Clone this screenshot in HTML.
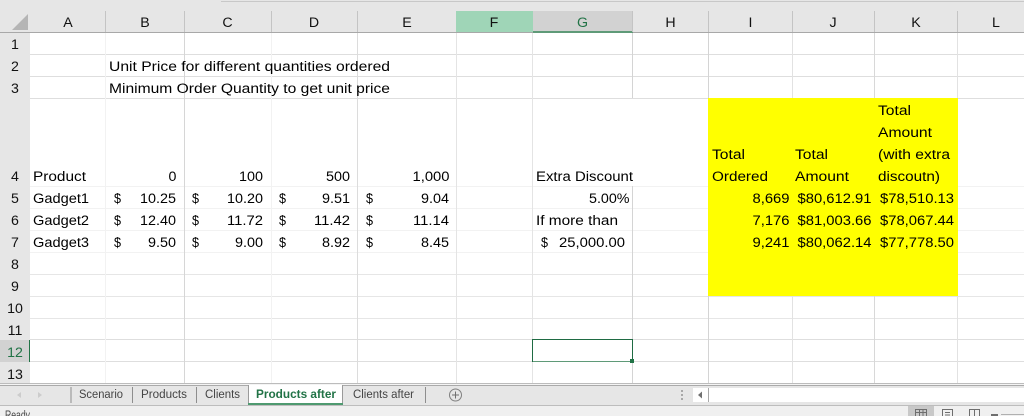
<!DOCTYPE html>
<html><head><meta charset="utf-8"><style>
html,body{margin:0;padding:0;background:#fff;width:1024px;height:416px;overflow:hidden}
svg{display:block;font-family:"Liberation Sans",sans-serif}
text{font-size:14.2px;fill:#000}
.h{text-anchor:middle;fill:#111}
.t{font-size:12.4px;fill:#444}
</style></head><body>
<svg width="1024" height="416" viewBox="0 0 1024 416" xmlns="http://www.w3.org/2000/svg">
<rect width="1024" height="416" fill="#fff"/>
<!-- horizontal grid -->
<g stroke="#dedede" stroke-width="1">
<path d="M30 54.5H1024M30 76.5H1024M30 98.5H708M958 98.5H1024"/>
</g>
<g stroke="#f2f2f2" stroke-width="1">
<path d="M30 186.5H1024M30 208.5H1024M30 230.5H1024M30 252.5H1024"/>
</g>
<g stroke="#e6e6e6" stroke-width="1">
<path d="M30 274.500H1024M30 296.500H1024M30 318.500H1024"/>
</g>
<g stroke="#dedede" stroke-width="1">
<path d="M30 339.5H1024M30 361.5H1024"/>
</g>
<!-- vertical grid -->
<g stroke-width="1" fill="none">
<path d="M105.5 32V383" stroke="#f2f2f2"/>
<path d="M184.5 32V383" stroke="#d6d6d6"/>
<path d="M271.5 32V383" stroke="#f2f2f2"/>
<path d="M357.5 32V383" stroke="#dcdcdc"/>
<path d="M456.5 32V383" stroke="#e4e4e4"/>
<path d="M532.5 32V383" stroke="#e4e4e4"/>
<path d="M632.5 32V98M632.5 186V383" stroke="#d4d4d4"/>
<path d="M708.5 32V383" stroke="#d4d4d4"/>
<path d="M792.5 32V383" stroke="#e2e2e2"/>
<path d="M874.5 32V383" stroke="#d8d8d8"/>
<path d="M957.5 32V383" stroke="#e2e2e2"/>
</g>
<!-- yellow block -->
<rect x="708" y="98" width="250" height="198" fill="#ffff00"/>
<!-- column header -->
<rect x="0" y="0" width="1024" height="32" fill="#e6e6e6"/>
<rect x="221" y="1" width="803" height="1" fill="#c8c8c8"/>
<rect x="0" y="32" width="1024" height="1" fill="#a8a8a8"/>
<rect x="456" y="11" width="77" height="21" fill="#9fd5b7"/>
<rect x="533" y="11" width="100" height="21" fill="#d2d2d2"/>
<rect x="533" y="31" width="100" height="2" fill="#5f9a78"/>
<path d="M28 14V30H12Z" fill="#b5b5b5"/>
<g fill="#c4c4c4">
<rect x="105" y="11" width="1" height="21"/><rect x="184" y="11" width="1" height="21"/><rect x="271" y="11" width="1" height="21"/><rect x="357" y="11" width="1" height="21"/><rect x="632" y="11" width="1" height="21"/><rect x="708" y="11" width="1" height="21"/><rect x="792" y="11" width="1" height="21"/><rect x="874" y="11" width="1" height="21"/><rect x="957" y="11" width="1" height="21"/>
</g>
<!-- row header -->
<rect x="0" y="33" width="30" height="351" fill="#e6e6e6"/>
<rect x="0" y="340" width="29" height="22" fill="#d2d2d2"/>
<rect x="29" y="340" width="1" height="22" fill="#217346"/>
<!-- column letters -->
<g>
<text class="h" x="68" y="27">A</text><text class="h" x="145" y="27">B</text><text class="h" x="227.5" y="27">C</text><text class="h" x="314" y="27">D</text><text class="h" x="407" y="27">E</text><text class="h" x="494" y="27">F</text>
<text class="h" x="582.5" y="27" style="fill:#217346">G</text><text class="h" x="670.5" y="27">H</text><text class="h" x="750.5" y="27">I</text><text class="h" x="833" y="27">J</text><text class="h" x="916" y="27">K</text><text class="h" x="996" y="27">L</text>
</g>
<!-- row numbers -->
<g>
<text class="h" x="15" y="49">1</text><text class="h" x="15" y="71">2</text><text class="h" x="15" y="93">3</text><text class="h" x="15" y="181">4</text><text class="h" x="15" y="203">5</text><text class="h" x="15" y="225">6</text><text class="h" x="15" y="247">7</text><text class="h" x="15" y="269">8</text><text class="h" x="15" y="291">9</text><text class="h" x="15" y="313">10</text><text class="h" x="15" y="335">11</text>
<text class="h" x="15" y="357" style="fill:#217346">12</text><text class="h" x="15" y="379">13</text>
</g>
<!-- headings -->
<text x="109" y="71" textLength="281" lengthAdjust="spacingAndGlyphs">Unit Price for different quantities ordered</text>
<text x="109" y="93" textLength="281" lengthAdjust="spacingAndGlyphs">Minimum Order Quantity to get unit price</text>
<!-- table -->
<text x="33" y="181" textLength="53" lengthAdjust="spacingAndGlyphs">Product</text>
<text x="33" y="203" textLength="56" lengthAdjust="spacingAndGlyphs">Gadget1</text>
<text x="33" y="225" textLength="56" lengthAdjust="spacingAndGlyphs">Gadget2</text>
<text x="33" y="247" textLength="56" lengthAdjust="spacingAndGlyphs">Gadget3</text>
<text x="168.5" y="181">0</text>
<text x="239" y="181" textLength="24" lengthAdjust="spacingAndGlyphs">100</text>
<text x="326" y="181" textLength="24" lengthAdjust="spacingAndGlyphs">500</text>
<text x="412.5" y="181" textLength="37" lengthAdjust="spacingAndGlyphs">1,000</text>
<g>
<text x="114" y="203" textLength="7" lengthAdjust="spacingAndGlyphs">$</text><text x="114" y="225" textLength="7" lengthAdjust="spacingAndGlyphs">$</text><text x="114" y="247" textLength="7" lengthAdjust="spacingAndGlyphs">$</text>
<text x="192" y="203" textLength="7" lengthAdjust="spacingAndGlyphs">$</text><text x="192" y="225" textLength="7" lengthAdjust="spacingAndGlyphs">$</text><text x="192" y="247" textLength="7" lengthAdjust="spacingAndGlyphs">$</text>
<text x="279" y="203" textLength="7" lengthAdjust="spacingAndGlyphs">$</text><text x="279" y="225" textLength="7" lengthAdjust="spacingAndGlyphs">$</text><text x="279" y="247" textLength="7" lengthAdjust="spacingAndGlyphs">$</text>
<text x="366" y="203" textLength="7" lengthAdjust="spacingAndGlyphs">$</text><text x="366" y="225" textLength="7" lengthAdjust="spacingAndGlyphs">$</text><text x="366" y="247" textLength="7" lengthAdjust="spacingAndGlyphs">$</text>
</g>
<text x="140" y="203" textLength="36" lengthAdjust="spacingAndGlyphs">10.25</text>
<text x="140" y="225" textLength="36" lengthAdjust="spacingAndGlyphs">12.40</text>
<text x="148" y="247" textLength="28" lengthAdjust="spacingAndGlyphs">9.50</text>
<text x="227" y="203" textLength="36" lengthAdjust="spacingAndGlyphs">10.20</text>
<text x="227" y="225" textLength="36" lengthAdjust="spacingAndGlyphs">11.72</text>
<text x="235" y="247" textLength="28" lengthAdjust="spacingAndGlyphs">9.00</text>
<text x="322" y="203" textLength="28" lengthAdjust="spacingAndGlyphs">9.51</text>
<text x="314" y="225" textLength="36" lengthAdjust="spacingAndGlyphs">11.42</text>
<text x="322" y="247" textLength="28" lengthAdjust="spacingAndGlyphs">8.92</text>
<text x="421" y="203" textLength="28" lengthAdjust="spacingAndGlyphs">9.04</text>
<text x="413" y="225" textLength="36" lengthAdjust="spacingAndGlyphs">11.14</text>
<text x="421" y="247" textLength="28" lengthAdjust="spacingAndGlyphs">8.45</text>
<!-- G column -->
<text x="536" y="181" textLength="97" lengthAdjust="spacingAndGlyphs">Extra Discount</text>
<text x="589" y="203" textLength="40.5" lengthAdjust="spacingAndGlyphs">5.00%</text>
<text x="536" y="225" textLength="82" lengthAdjust="spacingAndGlyphs">If more than</text>
<text x="541" y="247" textLength="7" lengthAdjust="spacingAndGlyphs">$</text>
<text x="559" y="247" textLength="66" lengthAdjust="spacingAndGlyphs">25,000.00</text>
<!-- yellow text -->
<text x="878" y="115" textLength="33" lengthAdjust="spacingAndGlyphs">Total</text>
<text x="878" y="137" textLength="54" lengthAdjust="spacingAndGlyphs">Amount</text>
<text x="878" y="159" textLength="72" lengthAdjust="spacingAndGlyphs">(with extra</text>
<text x="878" y="181" textLength="62" lengthAdjust="spacingAndGlyphs">discoutn)</text>
<text x="712" y="159" textLength="33" lengthAdjust="spacingAndGlyphs">Total</text>
<text x="712" y="181" textLength="56" lengthAdjust="spacingAndGlyphs">Ordered</text>
<text x="795" y="159" textLength="33" lengthAdjust="spacingAndGlyphs">Total</text>
<text x="795" y="181" textLength="54" lengthAdjust="spacingAndGlyphs">Amount</text>
<text x="752.5" y="203" textLength="37" lengthAdjust="spacingAndGlyphs">8,669</text>
<text x="752.5" y="225" textLength="37" lengthAdjust="spacingAndGlyphs">7,176</text>
<text x="752.5" y="247" textLength="37" lengthAdjust="spacingAndGlyphs">9,241</text>
<text x="797.5" y="203" textLength="74" lengthAdjust="spacingAndGlyphs">$80,612.91</text>
<text x="797.5" y="225" textLength="74" lengthAdjust="spacingAndGlyphs">$81,003.66</text>
<text x="797.5" y="247" textLength="74" lengthAdjust="spacingAndGlyphs">$80,062.14</text>
<text x="880" y="203" textLength="74" lengthAdjust="spacingAndGlyphs">$78,510.13</text>
<text x="880" y="225" textLength="74" lengthAdjust="spacingAndGlyphs">$78,067.44</text>
<text x="880" y="247" textLength="74" lengthAdjust="spacingAndGlyphs">$77,778.50</text>
<!-- selection -->
<rect x="532.5" y="339.5" width="100" height="22" fill="none" stroke="#1f6b43" stroke-width="1"/>
<rect x="533" y="361" width="99" height="1" fill="#5f9a78"/>
<rect x="630" y="359" width="4" height="4" fill="#217346"/>
<!-- sheet tab bar -->
<rect x="0" y="383" width="1024" height="1" fill="#bcbcbc"/>
<rect x="0" y="384" width="1024" height="1" fill="#f4f4f4"/>
<rect x="0" y="385" width="1024" height="20" fill="#e6e6e6"/>
<rect x="0" y="385" width="1024" height="1" fill="#aaaaaa"/>
<rect x="0" y="405" width="1024" height="1" fill="#bdbdbd"/>
<rect x="0" y="406" width="1024" height="10" fill="#f0f0f0"/>
<path d="M21 392V398L17 395Z" fill="#cccccc"/>
<path d="M38 392V398L42 395Z" fill="#cccccc"/>
<g fill="#8e8e8e">
<rect x="70.5" y="387" width="1" height="16"/><rect x="132" y="387" width="1" height="16"/><rect x="196" y="387" width="1" height="16"/><rect x="425" y="387" width="1" height="16"/>
</g>
<rect x="248.5" y="385" width="94" height="18" fill="#fff"/>
<rect x="248" y="385" width="1" height="18" fill="#9a9a9a"/>
<rect x="342" y="385" width="1" height="18" fill="#9a9a9a"/>
<rect x="248" y="403" width="95" height="2" fill="#4f9a70"/>
<text class="t" x="79" y="398" textLength="44" lengthAdjust="spacingAndGlyphs">Scenario</text>
<text class="t" x="141" y="398" textLength="46" lengthAdjust="spacingAndGlyphs">Products</text>
<text class="t" x="205" y="398" textLength="35" lengthAdjust="spacingAndGlyphs">Clients</text>
<text class="t" x="256" y="398" textLength="80" lengthAdjust="spacingAndGlyphs" style="font-weight:bold;fill:#217346">Products after</text>
<text class="t" x="353" y="398" textLength="61" lengthAdjust="spacingAndGlyphs">Clients after</text>
<circle cx="455.5" cy="395" r="6" fill="none" stroke="#808080" stroke-width="1"/>
<path d="M452 395H459M455.5 391.500V398.500" stroke="#707070" stroke-width="1" fill="none"/>
<!-- scrollbar -->
<g fill="#a8a8a8"><rect x="681" y="390" width="2" height="2"/><rect x="681" y="394" width="2" height="2"/><rect x="681" y="398" width="2" height="2"/></g>
<rect x="693" y="388" width="15" height="14" fill="#fff"/>
<path d="M702 391.500V398.500L698 395Z" fill="#707070"/>
<rect x="708" y="388" width="1" height="14" fill="#a8a8a8"/>
<rect x="709" y="388" width="315" height="14" fill="#fff"/>
<!-- status bar -->
<text class="t" x="5" y="419" textLength="25" lengthAdjust="spacingAndGlyphs">Ready</text>
<rect x="908" y="406" width="26" height="10" fill="#c8c8c8"/>
<g fill="none" stroke="#6e6e6e" stroke-width="1">
<path d="M915.500 416V409.500H926.500V416M915.500 412.500H926.500M919.500 409.500V416M923 409.500V416"/>
<path d="M942.500 416V409.500H952.500V416M945 412.500H950M945 415H950"/>
<path d="M969.500 416V409.500H979.500V416M974.500 409.500V416"/>
</g>
<rect x="991" y="414" width="7" height="2" fill="#6e6e6e"/>
<rect x="1001" y="414" width="23" height="1" fill="#b0b0b0"/>
</svg>
</body></html>
